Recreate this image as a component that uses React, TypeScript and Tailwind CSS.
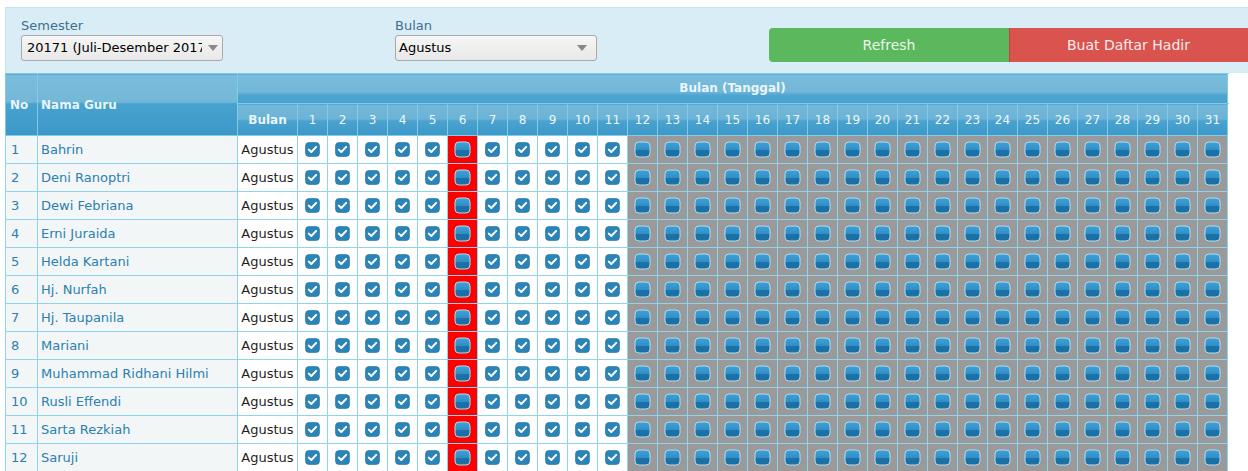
import React from "react";

const names = [
  "Bahrin",
  "Deni Ranoptri",
  "Dewi Febriana",
  "Erni Juraida",
  "Helda Kartani",
  "Hj. Nurfah",
  "Hj. Taupanila",
  "Mariani",
  "Muhammad Ridhani Hilmi",
  "Rusli Effendi",
  "Sarta Rezkiah",
  "Saruji",
];

const days = Array.from({ length: 31 }, (_, i) => i + 1);

function Checked() {
  return (
    <svg width="15" height="15" viewBox="0 0 15 15" className="block mx-auto">
      <rect x="0.5" y="0.5" width="14" height="14" rx="3.5" fill="#2a84b8" stroke="#1f6f9f" strokeWidth="0.6" />
      <path d="M3.8 7.6 L6.3 10 L11.2 4.9" fill="none" stroke="#ffffff" strokeWidth="2" strokeLinecap="round" strokeLinejoin="round" />
    </svg>
  );
}

function Unchecked() {
  return (
    <svg width="17" height="17" viewBox="0 0 17 17" className="block mx-auto">
      <defs>
        <linearGradient id="ug" x1="0" y1="0" x2="0" y2="1">
          <stop offset="0" stopColor="#41a2d6" />
          <stop offset="0.5" stopColor="#318fc6" />
          <stop offset="0.52" stopColor="#1a72a8" />
          <stop offset="1" stopColor="#1b6fa3" />
        </linearGradient>
      </defs>
      <rect x="1" y="1" width="15" height="15" rx="4" fill="url(#ug)" stroke="#b0dcf1" strokeWidth="1" />
    </svg>
  );
}

const headBg =
  "bg-[linear-gradient(to_bottom,#74b8d8_0%,#6cb3d6_48%,#4aa2cf_52%,#3d99c8_100%)]";

export default function App() {
  return (
    <div
      className="w-[1248px] h-[471px] overflow-hidden bg-white pl-[5px] pt-[7px]"
      style={{ fontFamily: "Verdana, 'DejaVu Sans', sans-serif" }}
    >
      <div className="h-[66px] w-[1260px] bg-[#d9edf7] border-t border-l border-[#c3e2f2] flex items-start">
        <div className="ml-[15px] mt-[10px] flex flex-col">
          <span className="text-[13px] leading-[16px] text-[#3f6f8f]">Semester</span>
          <div className="mt-[1px] w-[202px] h-[26px] rounded-[3px] border border-[#a9a9a9] bg-[linear-gradient(to_bottom,#f6f6f6,#e8e8e8)] flex items-center pl-[5px] pr-[4px] overflow-hidden">
            <span className="text-[13px] text-black whitespace-nowrap overflow-hidden flex-1">20171 (Juli-Desember 2017)</span>
            <svg width="10" height="6" viewBox="0 0 10 6" className="ml-[6px] shrink-0">
              <path d="M0 0 L10 0 L5 6 Z" fill="#888" />
            </svg>
          </div>
        </div>
        <div className="ml-[172px] mt-[10px] flex flex-col">
          <span className="text-[13px] leading-[16px] text-[#3f6f8f]">Bulan</span>
          <div className="mt-[1px] w-[202px] h-[26px] rounded-[3px] border border-[#a9a9a9] bg-[linear-gradient(to_bottom,#f6f6f6,#e8e8e8)] flex items-center pl-[3px] pr-[9px]">
            <span className="text-[13px] text-black flex-1">Agustus</span>
            <svg width="10" height="6" viewBox="0 0 10 6" className="shrink-0">
              <path d="M0 0 L10 0 L5 6 Z" fill="#888" />
            </svg>
          </div>
        </div>
        <div className="ml-[172px] mt-[20px] flex">
          <div className="w-[240px] h-[34px] rounded-l-[4px] bg-[#5cb85c] text-[#eaf6ea] text-[14px] flex items-center justify-center">
            Refresh
          </div>
          <div className="w-[250px] h-[34px] bg-[#d9534f] text-[#fbeceb] text-[14px] flex items-center justify-center border-l border-[#c9403b] pr-[12px]">
            Buat Daftar Hadir
          </div>
        </div>
      </div>

      <table className="border-collapse table-fixed w-[1222px]">
        <colgroup>
          <col className="w-[32px]" />
          <col className="w-[200px]" />
          <col className="w-[60px]" />
          {days.map((d) => (
            <col key={d} className="w-[30px]" />
          ))}
        </colgroup>
        <thead>
          <tr className="h-[30px]">
            <th
              rowSpan={2}
              className="border border-[#7fcbe8] text-left pl-[4px] text-[12px] font-bold text-[#e9f5fb] bg-[linear-gradient(to_bottom,#7abcdb_0%,#74b8d8_45%,#48a2cf_48%,#3c98c8_100%)]"
            >
              No
            </th>
            <th
              rowSpan={2}
              className="border border-[#7fcbe8] text-left pl-[3px] text-[12px] font-bold text-[#e9f5fb] bg-[linear-gradient(to_bottom,#7abcdb_0%,#74b8d8_45%,#48a2cf_48%,#3c98c8_100%)]"
            >
              Nama Guru
            </th>
            <th
              colSpan={34}
              className="border border-[#7fcbe8] text-center text-[12px] font-bold text-[#e9f5fb] bg-[linear-gradient(to_bottom,#7abcdb_0%,#72b7d8_60%,#4ba4d0_72%,#4aa3cf_100%)] pb-[1px]"
            >
              Bulan (Tanggal)
            </th>
          </tr>
          <tr className="h-[32px]">
            <th className={`border border-[#7fcbe8] text-[12px] font-bold text-[#e9f5fb] ${headBg}`}>Bulan</th>
            {days.map((d) => (
              <th
                key={d}
                className={`border border-[#7fcbe8] text-[12px] font-normal text-[#eef7fb] ${headBg}`}
              >
                {d}
              </th>
            ))}
          </tr>
        </thead>
        <tbody>
          {names.map((n, i) => (
            <tr key={n} className="h-[28px]">
              <td className="border border-[#8fd3ec] bg-[#f3f6f6] pl-[5px] text-[13px] text-[#2a80b0]">{i + 1}</td>
              <td className="border border-[#8fd3ec] bg-[#f3f6f6] pl-[3px] text-[13px] text-[#2a80b0] whitespace-nowrap">{n}</td>
              <td className="border border-[#8fd3ec] bg-white text-center text-[13px] text-[#222]">Agustus</td>
              {days.map((d) => {
                const bg = d === 6 ? "bg-[#ff0000]" : d >= 12 ? "bg-[#9a9a9a]" : "bg-white";
                return (
                  <td key={d} className={`border border-[#8fd3ec] p-0 ${bg}`}>
                    {d === 6 || d >= 12 ? <Unchecked /> : <Checked />}
                  </td>
                );
              })}
            </tr>
          ))}
        </tbody>
      </table>
    </div>
  );
}
